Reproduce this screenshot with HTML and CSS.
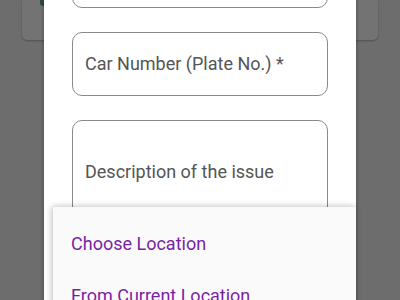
FILE: index.html
```html
<!DOCTYPE html>
<html>
<head>
<meta charset="utf-8">
<link rel="stylesheet" href="styles.css">
</head>
<body>
<div class="page">
  <div class="card"><span class="chip"></span></div>
</div>
<div class="dialog">
  <div class="field"></div>
  <div class="field"><span class="label">Car Number (Plate No.) *</span></div>
  <div class="field tall"><span class="label">Description of the issue</span></div>
</div>
<div class="menu">
  <div class="item">Choose Location</div>
  <div class="item">From Current Location</div>
</div>
</body>
</html>
```
FILE: styles.css
```css
html, body {
  margin: 0;
  padding: 0;
  width: 400px;
  height: 300px;
  overflow: hidden;
  background: #6d6d6d;
  font-family: Roboto, "Liberation Sans", sans-serif;
}
.page {
  padding: 0 22px;
}
.card {
  height: 40px;
  background: #737373;
  border-radius: 0 0 5px 5px;
  box-shadow: 0 1px 2px rgba(0,0,0,0.25);
  position: relative;
}
.chip {
  position: absolute;
  left: 18px;
  top: 0;
  width: 6px;
  height: 6px;
  background: #2f4a45;
  border-radius: 0 0 0 3px;
}
.dialog {
  position: absolute;
  left: 44px;
  top: -56px;
  width: 312px;
  height: 420px;
  background: #ffffff;
  box-shadow: 0 0 4px rgba(0,0,0,0.35);
  padding: 0 28px;
  box-sizing: border-box;
  display: flex;
  flex-direction: column;
  gap: 24px;
}
.field {
  height: 64px;
  border: 1px solid #8a8a8a;
  border-radius: 10px;
  box-sizing: border-box;
  display: flex;
  align-items: center;
  padding-left: 12px;
}
.field.tall {
  height: 130px;
  align-items: flex-start;
  padding-top: 39px;
}
.label {
  font-size: 18px;
  color: #555555;
  line-height: 24px;
}
.menu {
  position: absolute;
  left: 53px;
  top: 207px;
  width: 303px;
  height: 140px;
  background: #fafafa;
  box-shadow: 0 -1px 6px rgba(0,0,0,0.12), -2px 0 6px rgba(0,0,0,0.15);
  padding-top: 10px;
  box-sizing: border-box;
}
.item {
  height: 52px;
  display: flex;
  align-items: center;
  padding-left: 18px;
  font-size: 18px;
  color: #7b1fa2;
}
```
